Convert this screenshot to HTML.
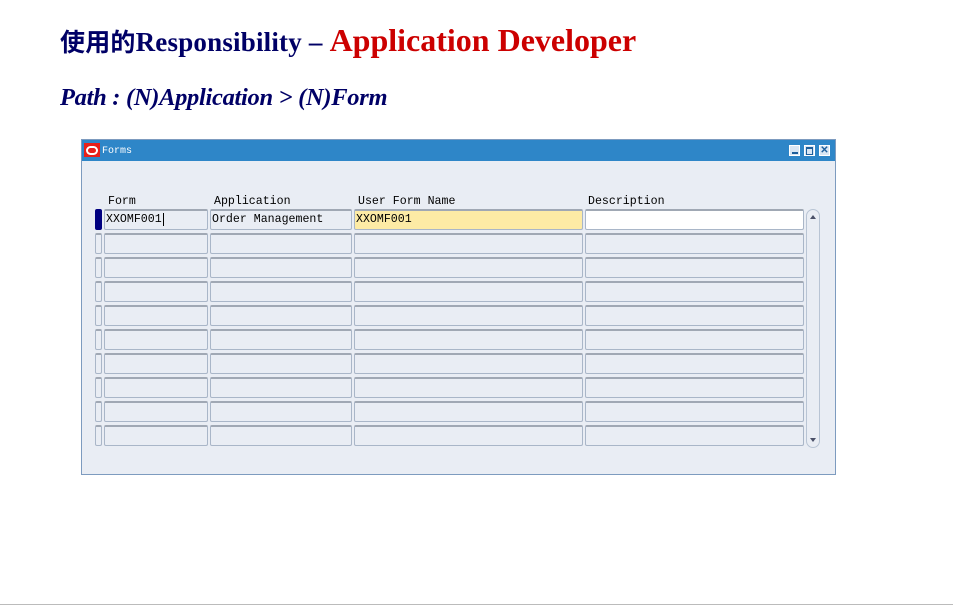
<!DOCTYPE html>
<html><head><meta charset="utf-8"><style>
body{margin:0;width:953px;height:607px;background:#fff;position:relative;overflow:hidden;font-family:"Liberation Serif","Noto Serif CJK SC",serif}
.a{position:absolute}
.t1{left:60px;top:22px;color:#000066;font-weight:bold;font-size:27px;white-space:nowrap;letter-spacing:0.2px}
.t1 .r{color:#cc0000;font-size:32px;letter-spacing:0}
.t1 .c{font-family:"Noto Sans CJK SC",sans-serif;font-weight:bold;font-size:25px}
.t2{left:60px;top:84px;color:#000066;font-weight:bold;font-style:italic;font-size:24.5px;white-space:nowrap;letter-spacing:-0.3px}
.win{left:81px;top:139px;width:753px;height:334px;background:#e9edf4;border:1px solid #7d9bbf}
.tb{left:0;top:0;width:753px;height:21px;background:#2e86c8}
.mono{font-family:"Liberation Mono","DejaVu Sans Mono",monospace;font-size:11.6px;color:#000}
.cell{position:absolute;height:21px;background:#e9edf4;border:1px solid #a9b6c8;border-top:2px solid #a0a8b4;box-sizing:border-box;border-radius:2px}
.hd{position:absolute;top:55px}
.btn{position:absolute;top:5px;width:11px;height:11px;background:#d8e6f4;border:1px solid #fff;box-sizing:border-box}
</style></head><body>
<div class="a t1"><span class="c">使用的</span>Responsibility – <span class="r">Application Developer</span></div>
<div class="a t2">Path : (N)Application &gt; (N)Form</div>
<div class="a win">
 <div class="a tb">
  <div class="a" style="left:2px;top:3px;width:16px;height:14px;background:#e8201a"><div class="a" style="left:2px;top:3px;width:8px;height:5px;border:2px solid #fff;border-radius:5px"></div></div>
  <div class="a mono" style="left:20px;top:6px;color:#fff;font-size:10px">Forms</div>
  <div class="btn" style="left:707px"><div class="a" style="left:2px;top:6px;width:6px;height:2px;background:#1d5f9c"></div></div>
  <div class="btn" style="left:722px"><div class="a" style="left:1px;top:1px;width:5px;height:5px;border:1px solid #1d5f9c;border-top-width:2px"></div></div>
  <div class="btn" style="left:737px;font:bold 10px sans-serif;color:#1d5f9c;text-align:center;line-height:9px">✕</div>
 </div>
 <div class="hd mono" style="left:26px">Form</div>
 <div class="hd mono" style="left:132px">Application</div>
 <div class="hd mono" style="left:276px">User Form Name</div>
 <div class="hd mono" style="left:506px">Description</div>
 <div id="rows"></div>
 <div class="a" style="left:724px;top:69px;width:14px;height:239px;border:1px solid #b8c4d4;border-radius:7px;box-sizing:border-box;background:#e9edf4">
  <div class="a" style="left:3px;top:5px;border:3px solid transparent;border-bottom:4px solid #4a5068;border-top:0"></div>
  <div class="a" style="left:3px;bottom:5px;border:3px solid transparent;border-top:4px solid #4a5068;border-bottom:0"></div>
 </div>
</div>
<div class="a" style="left:0;top:604px;width:953px;height:1px;background:#bbb"></div>
<script>
var h='';
for(var i=0;i<10;i++){var y=69+i*24;
h+='<div class="cell" style="left:13px;top:'+y+'px;width:7px;'+(i==0?'background:#000080;border-color:#000080':'')+'"></div>';
h+='<div class="cell" style="left:22px;top:'+y+'px;width:104px"></div>';
h+='<div class="cell" style="left:128px;top:'+y+'px;width:142px"></div>';
h+='<div class="cell" style="left:272px;top:'+y+'px;width:229px;'+(i==0?'background:#fdeba5':'')+'"></div>';
h+='<div class="cell" style="left:503px;top:'+y+'px;width:219px;'+(i==0?'background:#fff':'')+'"></div>';}
h+='<div class="a mono" style="left:24px;top:73px">XXOMF001<span style="border-left:1px solid #000;margin-left:1px"></span></div>';
h+='<div class="a mono" style="left:130px;top:73px">Order Management</div>';
h+='<div class="a mono" style="left:274px;top:73px">XXOMF001</div>';
document.getElementById('rows').innerHTML=h;
</script>
</body></html>
